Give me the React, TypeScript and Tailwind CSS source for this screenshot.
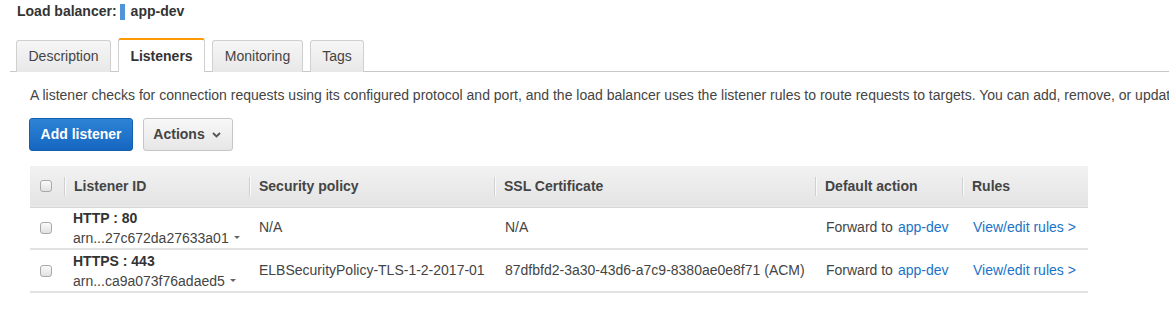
import React from "react";

const cols = "grid grid-cols-[34px_185px_245px_321px_147px_126px]";

const Checkbox = () => (
  <span className="inline-block w-[12px] h-[12px] rounded-[3px] border border-[#a9a9a9] bg-gradient-to-b from-[#fafafa] to-[#e2e2e2]" />
);

const Caret = () => (
  <svg width="8" height="5" viewBox="0 0 8 5" className="inline-block ml-[4px] mb-[2px]">
    <path d="M1 1 L4 4 L7 1 Z" fill="#666" />
  </svg>
);

const HeaderCell = ({ label }: { label: string }) => (
  <div className="flex items-center h-full">
    <span className="w-px h-[19px] bg-[#d0d0d0] shadow-[1px_0_0_#fafafa]" />
    <span className="pl-[9px] font-bold">{label}</span>
  </div>
);

const rows = [
  {
    proto: "HTTP : 80",
    arn: "arn...27c672da27633a01",
    policy: "N/A",
    cert: "N/A",
  },
  {
    proto: "HTTPS : 443",
    arn: "arn...ca9a073f76adaed5",
    policy: "ELBSecurityPolicy-TLS-1-2-2017-01",
    cert: "87dfbfd2-3a30-43d6-a7c9-8380ae0e8f71 (ACM)",
  },
];

const App = () => {
  return (
    <div className="w-[1169px] h-[328px] bg-white overflow-hidden text-[14px] text-[#444] font-['Liberation_Sans',Arial,sans-serif]">
      {/* Title */}
      <div className="flex items-center pl-[17px] pt-[2px] h-[19px] mt-[1px] font-bold text-[#333]">
        <span>Load balancer:</span>
        <span className="inline-block w-[5px] h-[16px] bg-[#5295d6] ml-[3px] mr-[6px]" />
        <span>app-dev</span>
      </div>

      {/* Tabs */}
      <div className="flex items-end mt-[19px] ml-[10px] border-b border-[#c8c8c8] h-[33px] gap-[7px] pl-[6px]">
        <div className="h-[32px] w-[95px] flex items-center justify-center border border-b-0 border-[#d0d0d0] rounded-t-[3px] bg-gradient-to-b from-[#f6f6f6] to-[#e8e8e8] text-[#444] -mb-px">
          Description
        </div>
        <div className="h-[34px] w-[87px] flex items-center justify-center border border-b-0 border-[#d0d0d0] border-t-2 border-t-[#f90] rounded-t-[3px] bg-white font-bold text-[#333] -mb-px pt-[1px]">
          Listeners
        </div>
        <div className="h-[32px] w-[91px] flex items-center justify-center border border-b-0 border-[#d0d0d0] rounded-t-[3px] bg-gradient-to-b from-[#f6f6f6] to-[#e8e8e8] -mb-px">
          Monitoring
        </div>
        <div className="h-[32px] w-[54px] flex items-center justify-center border border-b-0 border-[#d0d0d0] rounded-t-[3px] bg-gradient-to-b from-[#f6f6f6] to-[#e8e8e8] -mb-px">
          Tags
        </div>
      </div>

      {/* Description */}
      <p className="pl-[30px] mt-[14px] whitespace-nowrap leading-[18px]">
        A listener checks for connection requests using its configured protocol and port, and the load balancer uses the listener rules to route requests to targets. You can add, remove, or update listeners and edit listener rules.
      </p>

      {/* Buttons */}
      <div className="flex gap-[10px] pl-[29px] mt-[14px]">
        <button className="h-[33px] w-[104px] rounded-[3px] border border-[#1560ac] bg-gradient-to-b from-[#2d84d6] to-[#1566c0] text-white font-bold">
          Add listener
        </button>
        <button className="h-[33px] w-[90px] rounded-[3px] border border-[#c6c6c6] bg-gradient-to-b from-[#f8f8f8] to-[#e6e6e6] text-[#444] font-bold flex items-center justify-center gap-[7px] pr-[2px]">
          Actions
          <svg width="9" height="6" viewBox="0 0 9 6">
            <path d="M1 1 L4.5 4.5 L8 1" stroke="#555" strokeWidth="1.8" fill="none" />
          </svg>
        </button>
      </div>

      {/* Table */}
      <div className="ml-[30px] mt-[15px] w-[1058px]">
        <div className={`${cols} h-[41px] pt-[1px] bg-gradient-to-b from-[#f2f2f2] to-[#e4e4e4] border-b-[2px] border-[#e8e8e8] shadow-[0_1px_0_#d8d8d8] text-[#444]`}>
          <div className="flex items-center pl-[10px]">
            <Checkbox />
          </div>
          <HeaderCell label="Listener ID" />
          <HeaderCell label="Security policy" />
          <HeaderCell label="SSL Certificate" />
          <HeaderCell label="Default action" />
          <HeaderCell label="Rules" />
        </div>
        {rows.map((r) => (
          <div key={r.proto} className={`${cols} h-[43px] border-b-2 border-[#e2e2e2]`}>
            <div className="flex items-center pl-[10px]">
              <Checkbox />
            </div>
            <div className="flex flex-col justify-center pl-[9px] leading-[20px]">
              <span className="font-bold text-[#333]">{r.proto}</span>
              <span className="whitespace-nowrap">
                {r.arn}
                <Caret />
              </span>
            </div>
            <div className="flex items-center pl-[10px] whitespace-nowrap">{r.policy}</div>
            <div className="flex items-center pl-[11px] whitespace-nowrap">{r.cert}</div>
            <div className="flex items-center pl-[11px] whitespace-nowrap">
              Forward to<span className="ml-[5px] text-[#1a73c6]">app-dev</span>
            </div>
            <div className="flex items-center pl-[11px] whitespace-nowrap text-[#1a73c6]">View/edit rules &gt;</div>
          </div>
        ))}
      </div>
    </div>
  );
};

export default App;
